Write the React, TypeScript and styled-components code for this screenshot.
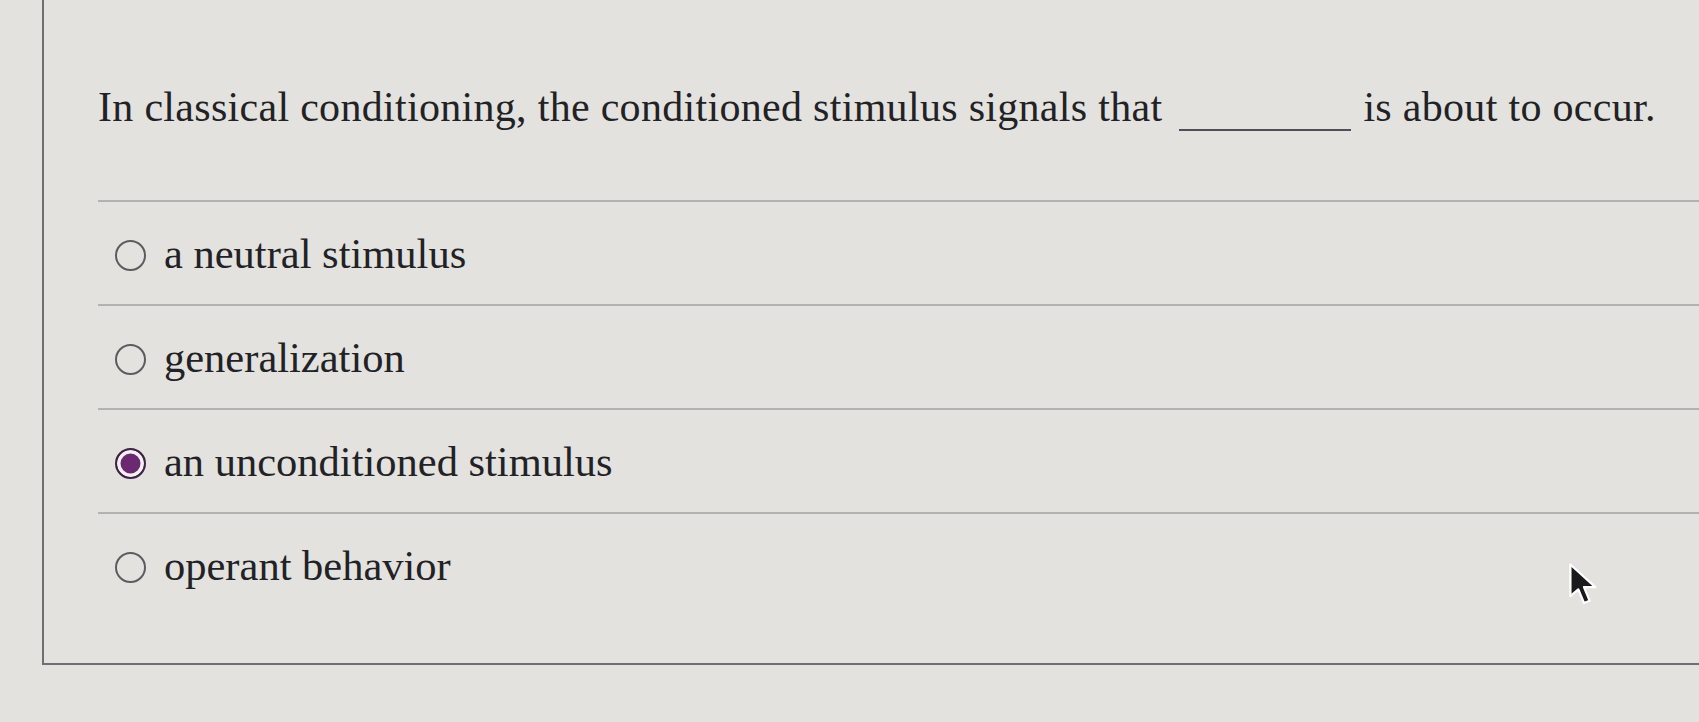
import React from "react";
import styled, { createGlobalStyle } from "styled-components";

const Global = createGlobalStyle`
  html, body { margin: 0; padding: 0; background: #e3e2de; }
  body { font-family: "Liberation Serif", "Times New Roman", serif; color: #222226; overflow: hidden; }
`;

const Page = styled.div`
  position: relative;
  width: 1699px;
  height: 722px;
  padding-left: 42px;
  box-sizing: border-box;
  background: #e3e2de;
`;

const Card = styled.div`
  height: 665px;
  box-sizing: border-box;
  border-left: 2px solid #6f6f72;
  border-bottom: 2px solid #6f6f72;
  padding: 82px 0 0 54px;
`;

const Question = styled.p`
  margin: 0;
  font-size: 42px;
  line-height: 50px;
  letter-spacing: 0.3px;
`;

const Blank = styled.span`
  display: inline-block;
  width: 172px;
  height: 2px;
  background: #4f4f55;
  margin: 0 12px 0 17px;
  vertical-align: -10px;
`;

const Options = styled.ul`
  list-style: none;
  margin: 68px 0 0 0;
  padding: 0;
  border-top: 2px solid #b2b2b4;
`;

const Option = styled.li<{ $last?: boolean }>`
  display: flex;
  align-items: center;
  gap: 18px;
  height: 102px;
  padding-left: 17px;
  border-bottom: ${(p) => (p.$last ? "none" : "2px solid #b2b2b4")};
  font-size: 42.5px;
`;

const Radio = styled.span<{ $checked?: boolean }>`
  flex: none;
  width: 31px;
  height: 31px;
  border-radius: 50%;
  box-sizing: border-box;
  border: 2.5px solid ${(p) => (p.$checked ? "#3e2440" : "#5c5c60")};
  background: ${(p) => (p.$checked ? "#6c2870" : "transparent")};
  box-shadow: ${(p) => (p.$checked ? "inset 0 0 0 3.5px #f4f0f4" : "none")};
  margin-top: 4px;
`;

const Cursor = styled.svg`
  position: absolute;
  left: 1567px;
  top: 562px;
`;

const options = [
  { label: "a neutral stimulus" },
  { label: "generalization" },
  { label: "an unconditioned stimulus", checked: true },
  { label: "operant behavior" },
];

export default function App() {
  return (
    <Page>
      <Global />
      <Card>
        <Question>
          In classical conditioning, the conditioned stimulus signals that
          <Blank />
          is about to occur.
        </Question>
        <Options>
          {options.map((o, i) => (
            <Option key={o.label} $last={i === options.length - 1}>
              <Radio $checked={o.checked} />
              <span>{o.label}</span>
            </Option>
          ))}
        </Options>
      </Card>
      <Cursor width="34" height="48" viewBox="0 0 30 42">
        <path
          d="M3 2 L3 30 L10 24 L15 36 L20 34 L15 22 L25 22 Z"
          fill="#1a1a1c"
          stroke="#ffffff"
          strokeWidth="2"
          strokeLinejoin="round"
        />
      </Cursor>
    </Page>
  );
}
